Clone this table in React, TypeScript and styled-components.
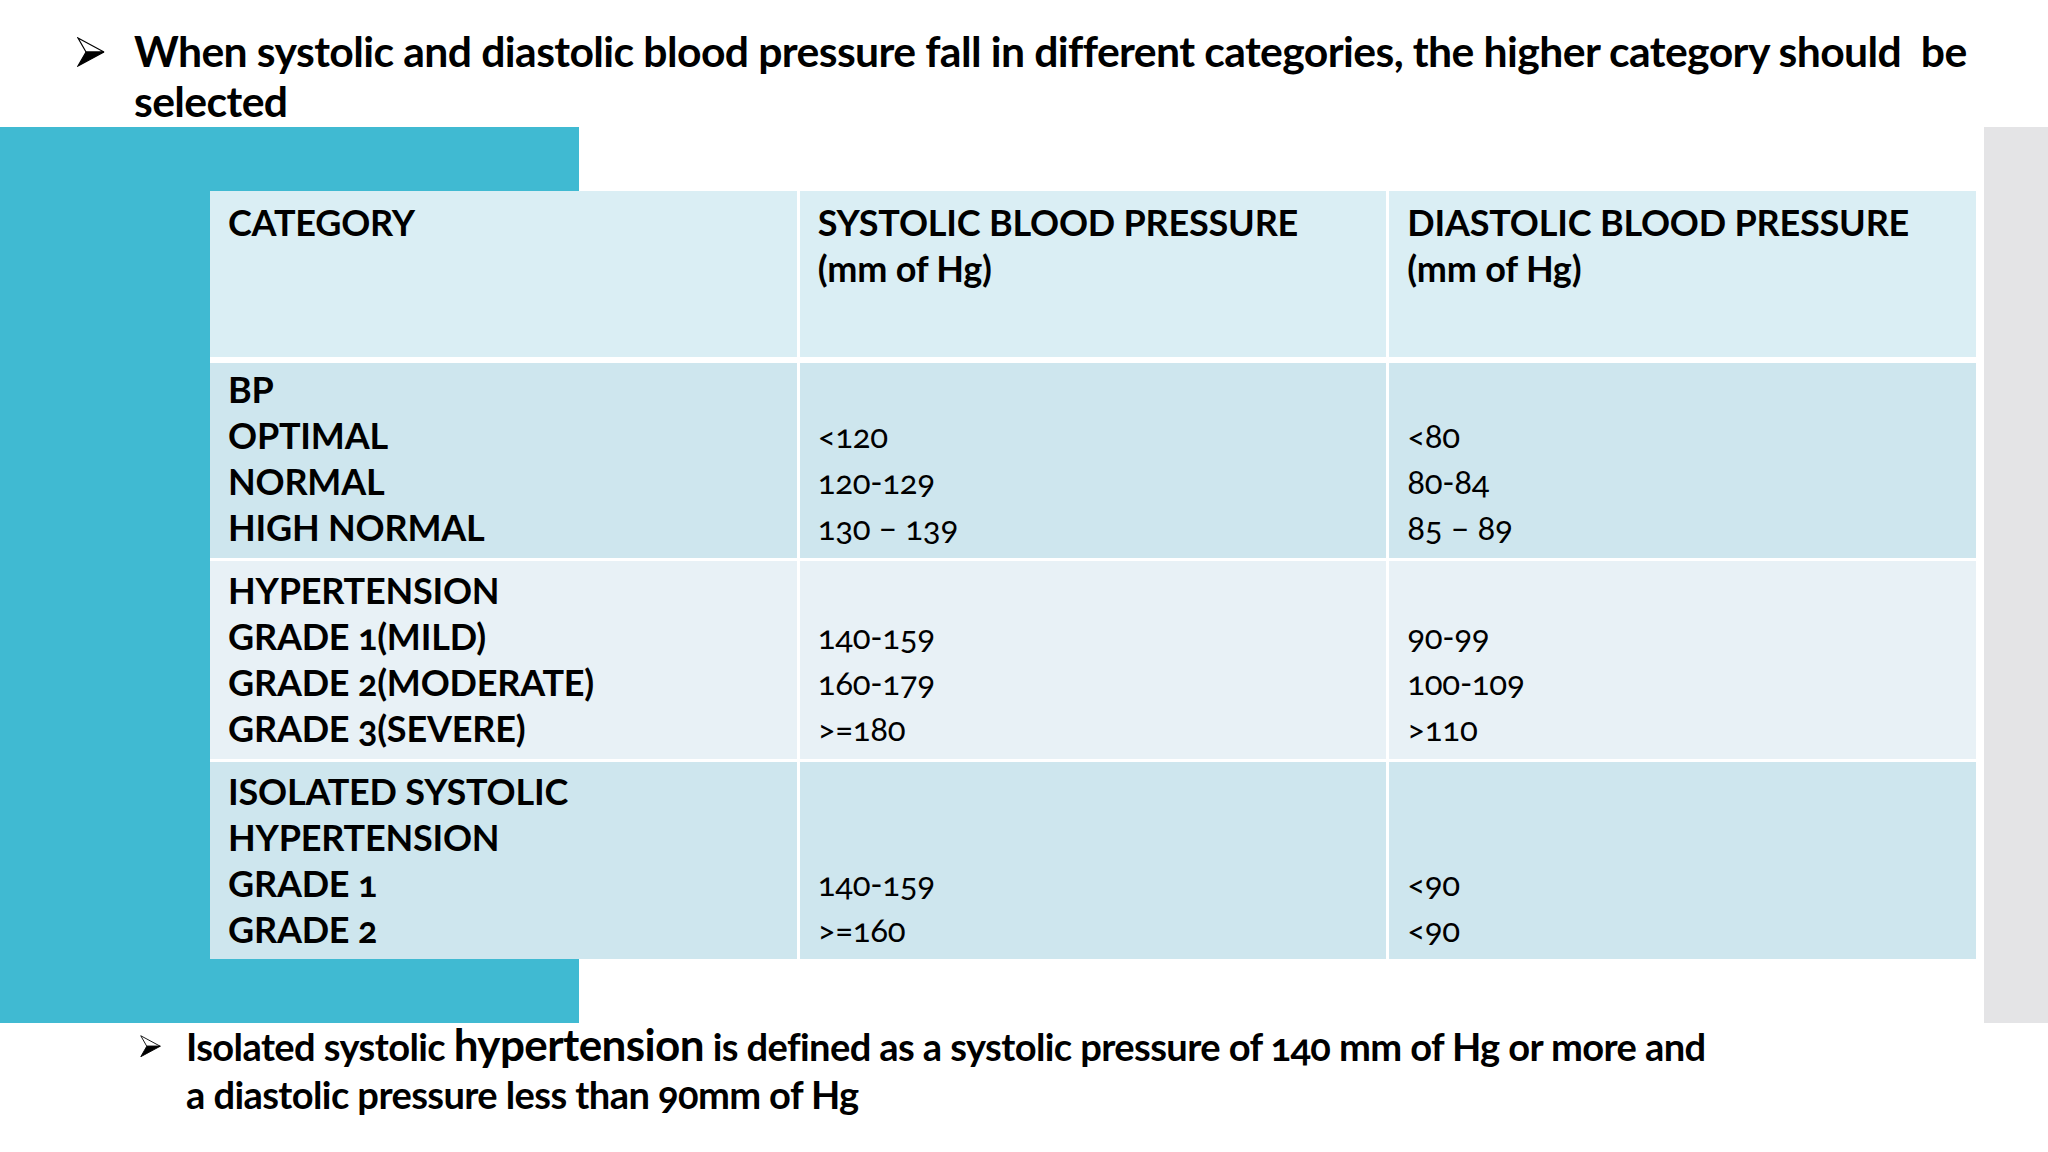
import React from 'react';
import styled, { createGlobalStyle } from 'styled-components';

const GlobalStyle = createGlobalStyle`
  html, body {
    margin: 0;
    padding: 0;
    background: #ffffff;
  }
  body {
    font-family: Lato, "Open Sans", "Noto Sans", sans-serif;
    color: #000000;
    font-variant-numeric: oldstyle-nums;
    font-feature-settings: "onum" 1;
  }
`;

interface RowData {
  tone: 'head' | 'band' | 'light';
  height: number;
  padTop: number;
  lines: string[][]; // one list of lines per column
}

const rows: RowData[] = [
  {
    tone: 'head',
    height: 166,
    padTop: 8,
    lines: [
      ['CATEGORY'],
      ['SYSTOLIC BLOOD PRESSURE', '(mm of Hg)'],
      ['DIASTOLIC BLOOD PRESSURE', '(mm of Hg)']
    ]
  },
  {
    tone: 'band',
    height: 195,
    padTop: 3,
    lines: [
      ['BP', 'OPTIMAL', 'NORMAL', 'HIGH NORMAL'],
      ['', '<120', '120-129', '130 – 139'],
      ['', '<80', '80-84', '85 – 89']
    ]
  },
  {
    tone: 'light',
    height: 198,
    padTop: 6,
    lines: [
      ['HYPERTENSION', 'GRADE 1(MILD)', 'GRADE 2(MODERATE)', 'GRADE 3(SEVERE)'],
      ['', '140-159', '160-179', '>=180'],
      ['', '90-99', '100-109', '>110']
    ]
  },
  {
    tone: 'band',
    height: 197,
    padTop: 6,
    lines: [
      ['ISOLATED SYSTOLIC', 'HYPERTENSION', 'GRADE 1', 'GRADE 2'],
      ['', '', '140-159', '>=160'],
      ['', '', '<90', '<90']
    ]
  }
];

const Arrow = ({ size }: { size: number }) => (
  <ArrowSvg width={size} height={size * 1.07} viewBox="0 0 28 30">
    <polygon points="1,1 27,15 9,15" fill="#ffffff" stroke="#000" strokeWidth="1.2" strokeLinejoin="miter" />
    <polygon points="27,15 1,29 9,15" fill="#000" stroke="#000" strokeWidth="1.2" strokeLinejoin="miter" />
  </ArrowSvg>
);

const App = () => {
  return (
    <>
      <GlobalStyle />
      <Slide>
        <TopNote>
          <Arrow size={28} />
          <TopText>
            When systolic and diastolic blood pressure fall in different categories, the higher category should&nbsp; be
            <br />
            selected
          </TopText>
        </TopNote>

        <Stage>
          <Table>
            {rows.map((row, r) => (
              <Row key={r} $height={row.height} $head={row.tone === 'head'}>
                {row.lines.map((col, c) => (
                  <Cell key={c} $tone={row.tone} $padTop={row.padTop} $numeric={row.tone !== 'head' && c > 0}>
                    {col.map((line, i) => (
                      <Line key={i}>{line || '\u00a0'}</Line>
                    ))}
                  </Cell>
                ))}
              </Row>
            ))}
          </Table>
        </Stage>

        <BottomNote>
          <Arrow size={21} />
          <BottomText>
            Isolated systolic <Big>hypertension</Big> is defined as a systolic pressure of 140 mm of Hg or more and
            <br />
            a diastolic pressure less than 90mm of Hg
          </BottomText>
        </BottomNote>
      </Slide>
    </>
  );
};
export default App;

const Slide = styled.div`
  width: 2048px;
  height: 1152px;
  overflow: hidden;
  background: #ffffff;
  display: flex;
  flex-direction: column;
`;

const ArrowSvg = styled.svg`
  display: block;
  flex-shrink: 0;
`;

const TopNote = styled.div`
  height: 127px;
  box-sizing: border-box;
  display: flex;
  align-items: flex-start;
  padding: 37px 0 0 77px;
  gap: 29px;
`;

const TopText = styled.div`
  margin-top: -11px;
  font-size: 42.7px;
  line-height: 50px;
  font-weight: 700;
  letter-spacing: -0.6px;
  white-space: nowrap;
`;

const Stage = styled.div`
  height: 896px;
  box-sizing: border-box;
  padding: 64px 72px 0 210px;
  background: linear-gradient(
    to right,
    #40bad2 0,
    #40bad2 579px,
    #ffffff 579px,
    #ffffff 1984px,
    #e4e4e6 1984px
  );
`;

const Table = styled.div`
  display: flex;
  flex-direction: column;
  gap: 3px;
  background: #ffffff;
`;

const Row = styled.div<{ $height: number; $head: boolean }>`
  display: grid;
  grid-template-columns: repeat(3, 1fr);
  column-gap: 3px;
  height: ${(p) => p.$height}px;
  margin-bottom: ${(p) => (p.$head ? 3 : 0)}px;
`;

const toneColor = {
  head: '#daeef4',
  band: '#cee6ee',
  light: '#e8f1f6'
};

const Cell = styled.div<{ $tone: 'head' | 'band' | 'light'; $padTop: number; $numeric: boolean }>`
  background: ${(p) => toneColor[p.$tone]};
  padding: ${(p) => p.$padTop}px 18px 0 18px;
  font-size: ${(p) => (p.$numeric ? 33 : 36)}px;
  font-weight: ${(p) => (p.$numeric ? 400 : 700)};
  letter-spacing: ${(p) => (p.$numeric ? '-0.3px' : '-0.2px')};
  color: #000;
`;

const Line = styled.div`
  line-height: 46px;
  white-space: nowrap;
`;

const BottomNote = styled.div`
  flex: 1;
  display: flex;
  align-items: flex-start;
  padding: 12px 0 0 140px;
  gap: 25px;
`;

const BottomText = styled.div`
  margin-top: -15px;
  font-size: 38.1px;
  line-height: 48px;
  font-weight: 700;
  letter-spacing: -0.6px;
  white-space: nowrap;
`;

const Big = styled.span`
  font-size: 44px;
`;
